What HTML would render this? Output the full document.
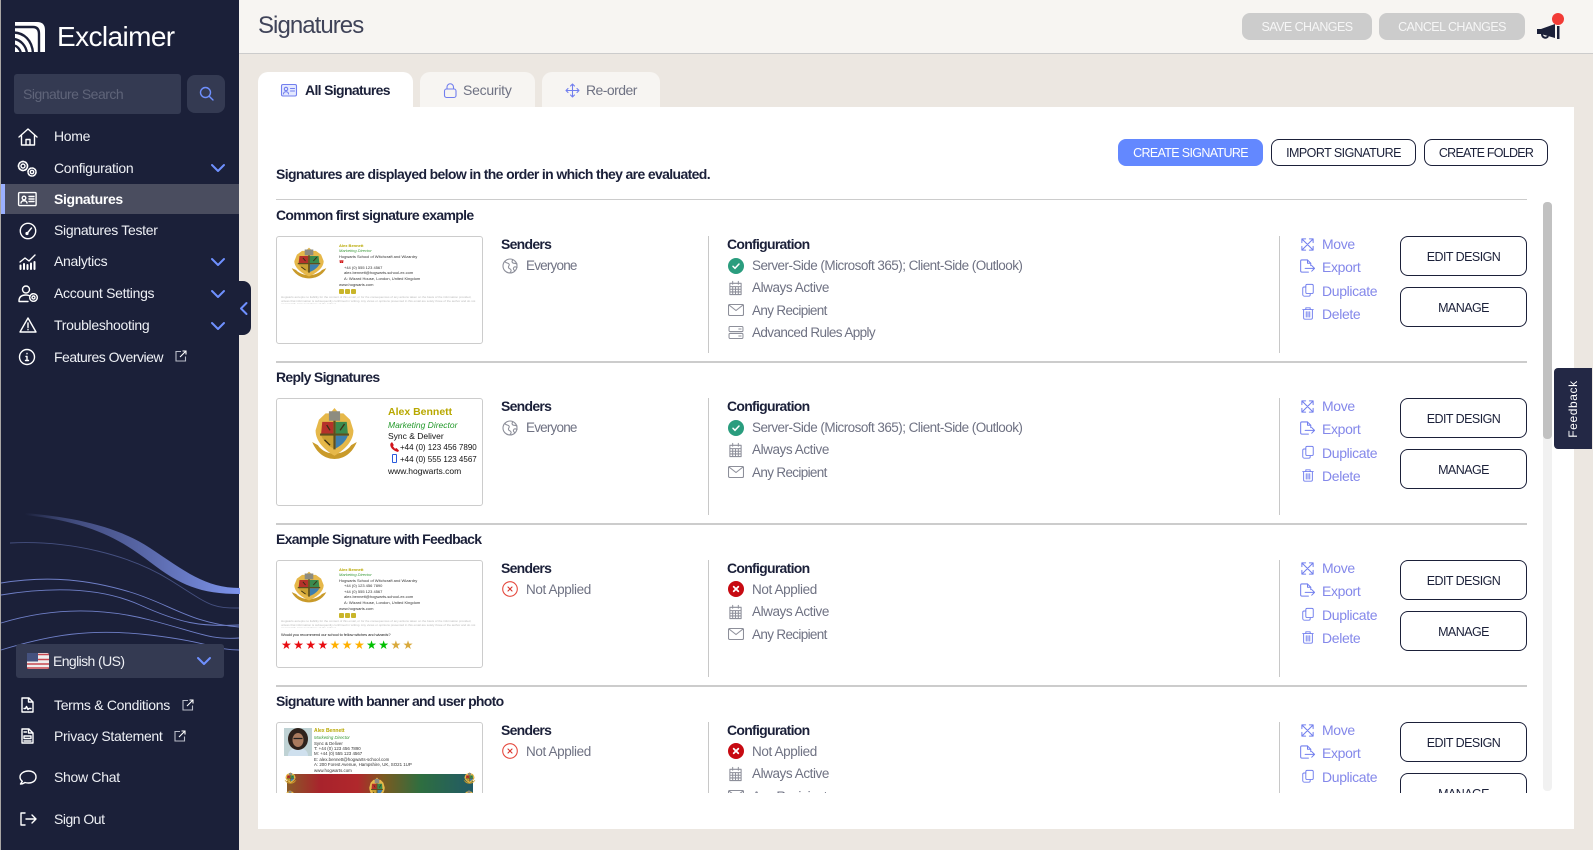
<!DOCTYPE html>
<html><head><meta charset="utf-8"><title>Signatures</title>
<style>
*{box-sizing:border-box;margin:0;padding:0}
html,body{width:1593px;height:850px;overflow:hidden;background:#ece7e1;font-family:"Liberation Sans",sans-serif;color:#1b2039}
.a{position:absolute}
.t{position:absolute;white-space:nowrap;height:20px;line-height:20px}
svg{position:absolute;overflow:visible;fill:none}
#side{left:1px;top:0;width:238px;height:850px;background:#1b2039}
#side .n{left:53px;font-size:14px;color:#eef0f5;letter-spacing:-.3px}
.ic{stroke:#fff;stroke-width:1.4;stroke-linecap:round;stroke-linejoin:round}
.chev{stroke:#6f90ff;stroke-width:2;stroke-linecap:round;stroke-linejoin:round}
.btn{position:absolute;border-radius:8px;text-align:center;font-size:12.5px;white-space:nowrap;letter-spacing:-.55px}
.out{border:1px solid #1b2039;background:#fff;color:#1b2039}
.row{position:absolute;left:0;width:1593px;height:100px}
.ti{left:276px;font-size:14px;font-weight:bold;letter-spacing:-.68px}
.thumb{position:absolute;left:276px;top:0;width:207px;height:108px;border:1px solid #ccc;border-radius:3px;background:#fff;overflow:hidden}
.h{font-size:14px;font-weight:bold;letter-spacing:-.72px}
.m{font-size:13.5px;color:#6f7283}
.ev{letter-spacing:-.8px}.sv{letter-spacing:-.55px}.aa{letter-spacing:-.43px}.ar{letter-spacing:-.66px}.adv{letter-spacing:-.6px}.na{letter-spacing:-.38px}
.act{font-size:14px;color:#8488ea;left:1322px;letter-spacing:-.35px}
.vl{position:absolute;top:0;width:1px;height:117px;background:#c8c8c8}
.s{stroke:#8d8f9a;stroke-width:1.1;stroke-linecap:round;stroke-linejoin:round}
.p{stroke:#727fee;stroke-width:1.1;stroke-linecap:round;stroke-linejoin:round}
.tt{position:absolute;white-space:nowrap;font-size:4px;line-height:5px;color:#333}
.sc{position:absolute;top:52px;width:5px;height:5px;background:#c9b52a;border-radius:1px}
</style></head><body>
<svg width="0" height="0" style="position:absolute"><defs>
<symbol id="crest" viewBox="0 0 44 50" preserveAspectRatio="none"><path d="M2 33C7 46 16 49 22 49S37 46 42 33L37 36C33 42 27 44 22 44S11 42 7 36Z" fill="#c99a2a"/><path d="M22 1L26 6H30L36 12L39 22C39 33 30 41 22 46C14 41 5 33 5 22L8 12L14 6H18Z" fill="#e6b84a"/><path d="M17 4h10v9H17z" fill="#8d8c80"/><path d="M11 14H21V25H10Z" fill="#b5312a"/><path d="M23 14H33L34 25H23Z" fill="#3a8a4e"/><path d="M10 27H21V39C16 37 12 32 10 27Z" fill="#c9a032"/><path d="M23 27H34C32 33 27 37 23 39Z" fill="#3e7fae"/><path d="M21 13h2v27h-2zM9 25h26v2H9z" fill="#5d4f1e"/><path d="M13 31l5 5M31 16l-4 6M15 17l3 5" stroke="#3a2f14" stroke-width="1.200"/></symbol>
<symbol id="expand" viewBox="0 0 16 16"><path d="M2 6V2h4M10 2h4v4M14 10v4h-4M6 14H2v-4M2 2l12 12M14 2L2 14"/></symbol>
<symbol id="export" viewBox="0 0 17 16"><path d="M9.500 14H2.500a1.300 1.300 0 0 1-1.300-1.300V2.300A1.300 1.300 0 0 1 2.500 1h6l3.500 3.500V7M8.500 1v3.500H12M6 10h10M13 7l3 3-3 3"/></symbol>
<symbol id="dup" viewBox="0 0 16 16"><rect x="5.500" y="1" width="8.500" height="10.500" rx="1.500"/><path d="M5.500 4H3.500A1.500 1.500 0 0 0 2 5.500v7A2 2 0 0 0 4 14.500h5a1.500 1.500 0 0 0 1.500-1.500v-1.500"/></symbol>
<symbol id="trash" viewBox="0 0 16 16"><path d="M2 3.500h12M5.500 3.500V1.500h5v2M3 3.500V13a1.500 1.500 0 0 0 1.500 1.500h7A1.500 1.500 0 0 0 13 13V3.500M6 6v6M8 6v6M10 6v6"/></symbol>
<symbol id="globe" viewBox="0 0 16 16"><circle cx="8" cy="8" r="7"/><path d="M3 3.500c1 2 3 1 4 2.500s-1 2-.5 3.500 2 1 2.500 2.500-.5 2-1 2.500M11 1.800C9.500 3 10 4.500 11 5s2.500 0 4 1M15 9.500c-1.500-1-3-1-3.500.5s.5 2 1 2.500"/></symbol>
<symbol id="okc" viewBox="0 0 16 16"><circle cx="8" cy="8" r="8" fill="#2a9d7e"/><path d="M5 8.300l2 2 4-4.300" stroke="#fff" stroke-width="1.500" fill="none" stroke-linecap="round"/></symbol>
<symbol id="noc" viewBox="0 0 16 16"><circle cx="8" cy="8" r="8" fill="#c70a12"/><path d="M5.700 5.700l4.600 4.600M10.300 5.700l-4.600 4.600" stroke="#fff" stroke-width="1.800" fill="none" stroke-linecap="round"/></symbol>
<symbol id="xo" viewBox="0 0 16 16"><circle cx="8" cy="8" r="7.300" stroke="#e5493e" stroke-width="1.100" fill="none"/><path d="M6 6l4 4M10 6l-4 4" stroke="#d8332a" stroke-width="1.100" fill="none" stroke-linecap="round"/></symbol>
<symbol id="cal" viewBox="0 0 16 16"><path d="M2 3h12v12H2zM2 6.500h12M2 9.300h12M2 12.200h12M5 6.500V15M8 6.500V15M11 6.500V15M5 1v3M11 1v3"/></symbol>
<symbol id="env" viewBox="0 0 16 12"><rect x=".5" y=".5" width="15" height="11" rx="1.200"/><path d="M1 1l7 5.500L15 1"/></symbol>
<symbol id="srv" viewBox="0 0 16 14"><rect x=".5" y=".5" width="15" height="5.500" rx="1.200"/><rect x=".5" y="8" width="15" height="5.500" rx="1.200"/><path d="M11 3.200h2.500M11 10.800h2.500"/></symbol>
<symbol id="ext" viewBox="0 0 12 12"><path d="M6 1.500H1v9.500h9.500V6.500" stroke="#b9bcc8"/><path d="M5 7l6-6M7.500 1H11v3.500" stroke="#fff"/></symbol>
</defs></svg>

<div class="a" style="left:0;top:0;width:1593px;height:54px;background:#f7f5f2;border-bottom:1px solid #ccc"></div>
<div class="t" style="left:258px;top:15px;font-size:24px;color:#3f4358;height:22px;line-height:22px;letter-spacing:-.95px">Signatures</div>
<div class="btn" style="left:1242px;top:13px;width:130px;height:27px;line-height:28px;background:#ccc;color:#f6f6f6">SAVE CHANGES</div>
<div class="btn" style="left:1379px;top:13px;width:146px;height:27px;line-height:28px;background:#ccc;color:#f6f6f6">CANCEL CHANGES</div>
<svg style="left:1537px;top:22px" width="24" height="18"><path d="M0 7h4L18 2v14L4 12H0z" fill="#1b2039"/><path d="M5 12c0 4 5 5 6 2" stroke="#1b2039" stroke-width="2"/><rect x="20" y="4" width="2.500" height="13" fill="#1b2039"/></svg>
<div class="a" style="left:1552px;top:13px;width:12px;height:12px;border-radius:50%;background:#f23b36"></div>

<!-- tabs -->
<div class="a" style="left:258px;top:72px;width:155px;height:36px;background:#fff;border-radius:10px 10px 0 0"></div>
<div class="a" style="left:420px;top:72px;width:115px;height:36px;background:#f7f5f2;border-radius:10px 10px 0 0"></div>
<div class="a" style="left:542px;top:72px;width:118px;height:36px;background:#f7f5f2;border-radius:10px 10px 0 0"></div>
<svg style="left:281px;top:84px" width="16" height="13" class="p"><rect x=".5" y=".5" width="15" height="11.500" rx="1.500" fill="#e4e9ff"/><circle cx="5" cy="5" r="1.700"/><path d="M2.500 10c0-3 5-3 5 0M9.500 4.500h4M9.500 7h4"/></svg>
<div class="t" style="left:305px;top:80px;font-size:14px;font-weight:bold;letter-spacing:-.66px">All Signatures</div>
<svg style="left:444px;top:83px" width="13" height="15" class="p"><rect x=".5" y="6" width="11.500" height="8.500" rx="2"/><path d="M3 6V4a3.200 3.200 0 0 1 6.500 0v2"/></svg>
<div class="t" style="left:463px;top:80px;font-size:14px;color:#6f7283;letter-spacing:-.25px">Security</div>
<svg style="left:565px;top:83px" width="15" height="15" class="p"><path d="M7.500 1v13M1 7.500h13M5.500 3l2-2 2 2M5.500 12l2 2 2-2M3 5.500l-2 2 2 2M12 5.500l2 2-2 2"/></svg>
<div class="t" style="left:586px;top:80px;font-size:14px;color:#6f7283;letter-spacing:-.55px">Re-order</div>

<div class="a" style="left:258px;top:107px;width:1316px;height:722px;background:#fff"></div>
<div class="btn" style="left:1118px;top:139px;width:145px;height:27px;line-height:28px;background:#6388ff;color:#fff;letter-spacing:-.65px">CREATE SIGNATURE</div>
<div class="btn out" style="left:1271px;top:139px;width:145px;height:27px;line-height:26px;letter-spacing:-.55px">IMPORT SIGNATURE</div>
<div class="btn out" style="left:1424px;top:139px;width:124px;height:27px;line-height:26px;letter-spacing:-.75px">CREATE FOLDER</div>
<div class="t" style="left:276px;top:164px;font-size:14px;font-weight:bold;letter-spacing:-.64px">Signatures are displayed below in the order in which they are evaluated.</div>
<div class="a" style="left:276px;top:199px;width:1251px;height:1px;background:#ccc"></div>
<div class="a" style="left:1543px;top:202px;width:9px;height:589px;background:#f1f1f1;border-radius:4px"></div>
<div class="a" style="left:1543px;top:202px;width:9px;height:237px;background:#c1c1c1;border-radius:4px"></div>

<div class="a" id="list" style="left:0;top:0;width:1593px;height:793px;overflow:hidden">

<!-- ROW 1 -->
<div class="row" style="top:236px">
<div class="t ti" style="top:-31px">Common first signature example</div>
<div class="thumb">
<svg style="left:13px;top:10px" width="38" height="32"><use href="#crest" width="38" height="32"/></svg>
<div class="tt" style="left:62px;top:6px;color:#b8a800;font-weight:bold">Alex Bennett</div>
<div class="tt" style="left:62px;top:11px;color:#3a9a3a;font-style:italic">Marketing Director</div>
<div class="tt" style="left:62px;top:17px">Hogwarts School of Witchcraft and Wizardry</div>
<div class="tt" style="left:62px;top:22px;color:#c00">&#9742;</div>
<div class="tt" style="left:67px;top:28px">+44 (0) 555 123 4567</div>
<div class="tt" style="left:67px;top:33px">alex.bennett@hogwarts-school-ex.com</div>
<div class="tt" style="left:67px;top:39px">A: Wizard House, London, United Kingdom</div>
<div class="tt" style="left:62px;top:45px">www.hogwarts.com</div>
<div class="sc" style="left:62px"></div><div class="sc" style="left:68px"></div><div class="sc" style="left:74px"></div>
<div class="tt" style="left:4px;top:59px;width:198px;white-space:normal;font-size:3px;line-height:3.500px;color:#bbb;height:8px;overflow:hidden">Hogwarts accepts no liability for the content of this email, or for the consequences of any actions taken on the basis of the information provided, unless that information is subsequently confirmed in writing. Any views or opinions presented in this email are solely those of the author and do not necessarily represent those of the school.</div>
</div>
<div class="t h" style="left:501px;top:-2px">Senders</div>
<svg class="s" style="left:502px;top:22px" width="16" height="16"><use href="#globe" width="16" height="16"/></svg>
<div class="t m ev" style="left:526px;top:20px">Everyone</div>
<div class="vl" style="left:708px"></div>
<div class="t h" style="left:727px;top:-2px">Configuration</div>
<svg style="left:728px;top:22px" width="16" height="16"><use href="#okc" width="16" height="16"/></svg>
<div class="t m sv" style="left:752px;top:20px">Server-Side (Microsoft 365); Client-Side (Outlook)</div>
<svg class="s" style="left:728px;top:44px" width="15" height="16"><use href="#cal" width="15" height="16"/></svg>
<div class="t m aa" style="left:752px;top:42px">Always Active</div>
<svg class="s" style="left:728px;top:68px" width="16" height="12"><use href="#env" width="16" height="12"/></svg>
<div class="t m ar" style="left:752px;top:65px">Any Recipient</div>
<svg class="s" style="left:728px;top:90px" width="16" height="13"><use href="#srv" width="16" height="13"/></svg>
<div class="t m adv" style="left:752px;top:87px">Advanced Rules Apply</div>
<div class="vl" style="left:1279px"></div>
<svg class="p" style="left:1300px;top:1px" width="15" height="15"><use href="#expand" width="15" height="15"/></svg><div class="t act" style="top:-2px">Move</div>
<svg class="p" style="left:1299px;top:23px" width="17" height="15"><use href="#export" width="17" height="15"/></svg><div class="t act" style="top:21px">Export</div>
<svg class="p" style="left:1301px;top:47px" width="14" height="15"><use href="#dup" width="14" height="15"/></svg><div class="t act" style="top:45px">Duplicate</div>
<svg class="p" style="left:1301px;top:70px" width="14" height="15"><use href="#trash" width="14" height="15"/></svg><div class="t act" style="top:68px">Delete</div>
<div class="btn out" style="left:1400px;top:0;width:127px;height:40px;line-height:40px">EDIT DESIGN</div>
<div class="btn out" style="left:1400px;top:51px;width:127px;height:40px;line-height:40px">MANAGE</div>
</div>

<!-- ROW 2 -->
<div class="row" style="top:398px">
<div class="a" style="left:276px;top:-37px;width:1251px;height:2px;background:#ccc"></div>
<div class="t ti" style="top:-31px">Reply Signatures</div>
<div class="thumb">
<svg style="left:33px;top:8px" width="49" height="53"><use href="#crest" width="49" height="53"/></svg>
<div class="tt" style="left:111px;top:7px;font-size:10.500px;line-height:13px;font-weight:bold;color:#b8a800">Alex Bennett</div>
<div class="tt" style="left:111px;top:21px;font-size:8.500px;line-height:11px;font-style:italic;color:#22992a">Marketing Director</div>
<div class="tt" style="left:111px;top:32px;font-size:8.500px;line-height:11px;color:#111">Sync &amp; Deliver</div>
<svg style="left:112px;top:43px" width="11" height="11"><path d="M1.500 1.500c-1.200 3 2 7 7.500 8.500l1-1.500-2.500-2.500-1.500.8-2-2.500.8-1.300L3 0z" fill="#d0141c"/></svg>
<div class="tt" style="left:123px;top:43px;font-size:8px;line-height:11px;color:#111;letter-spacing:0">+44 (0) 123 456 7890</div>
<div class="a" style="left:115px;top:55px;width:5px;height:9px;border:1.500px solid #2a5bdc;border-radius:1px"></div>
<div class="tt" style="left:123px;top:55px;font-size:8px;line-height:11px;color:#111;letter-spacing:0">+44 (0) 555 123 4567</div>
<div class="tt" style="left:111px;top:67px;font-size:8.500px;line-height:11px;color:#111">www.hogwarts.com</div>
</div>
<div class="t h" style="left:501px;top:-2px">Senders</div>
<svg class="s" style="left:502px;top:22px" width="16" height="16"><use href="#globe" width="16" height="16"/></svg>
<div class="t m ev" style="left:526px;top:20px">Everyone</div>
<div class="vl" style="left:708px"></div>
<div class="t h" style="left:727px;top:-2px">Configuration</div>
<svg style="left:728px;top:22px" width="16" height="16"><use href="#okc" width="16" height="16"/></svg>
<div class="t m sv" style="left:752px;top:20px">Server-Side (Microsoft 365); Client-Side (Outlook)</div>
<svg class="s" style="left:728px;top:44px" width="15" height="16"><use href="#cal" width="15" height="16"/></svg>
<div class="t m aa" style="left:752px;top:42px">Always Active</div>
<svg class="s" style="left:728px;top:68px" width="16" height="12"><use href="#env" width="16" height="12"/></svg>
<div class="t m ar" style="left:752px;top:65px">Any Recipient</div>
<div class="vl" style="left:1279px"></div>
<svg class="p" style="left:1300px;top:1px" width="15" height="15"><use href="#expand" width="15" height="15"/></svg><div class="t act" style="top:-2px">Move</div>
<svg class="p" style="left:1299px;top:23px" width="17" height="15"><use href="#export" width="17" height="15"/></svg><div class="t act" style="top:21px">Export</div>
<svg class="p" style="left:1301px;top:47px" width="14" height="15"><use href="#dup" width="14" height="15"/></svg><div class="t act" style="top:45px">Duplicate</div>
<svg class="p" style="left:1301px;top:70px" width="14" height="15"><use href="#trash" width="14" height="15"/></svg><div class="t act" style="top:68px">Delete</div>
<div class="btn out" style="left:1400px;top:0;width:127px;height:40px;line-height:40px">EDIT DESIGN</div>
<div class="btn out" style="left:1400px;top:51px;width:127px;height:40px;line-height:40px">MANAGE</div>
</div>

<!-- ROW 3 -->
<div class="row" style="top:560px">
<div class="a" style="left:276px;top:-37px;width:1251px;height:2px;background:#ccc"></div>
<div class="t ti" style="top:-31px">Example Signature with Feedback</div>
<div class="thumb">
<svg style="left:13px;top:10px" width="38" height="32"><use href="#crest" width="38" height="32"/></svg>
<div class="tt" style="left:62px;top:6px;color:#b8a800;font-weight:bold">Alex Bennett</div>
<div class="tt" style="left:62px;top:11px;color:#3a9a3a;font-style:italic">Marketing Director</div>
<div class="tt" style="left:62px;top:17px">Hogwarts School of Witchcraft and Wizardry</div>
<div class="tt" style="left:67px;top:22px">+44 (0) 123 456 7890</div>
<div class="tt" style="left:67px;top:28px">+44 (0) 555 123 4567</div>
<div class="tt" style="left:67px;top:33px">alex.bennett@hogwarts-school-ex.com</div>
<div class="tt" style="left:67px;top:39px">A: Wizard House, London, United Kingdom</div>
<div class="tt" style="left:62px;top:45px">www.hogwarts.com</div>
<div class="sc" style="left:62px"></div><div class="sc" style="left:68px"></div><div class="sc" style="left:74px"></div>
<div class="tt" style="left:4px;top:59px;width:198px;white-space:normal;font-size:3px;line-height:3.500px;color:#bbb;height:8px;overflow:hidden">Hogwarts accepts no liability for the content of this email, or for the consequences of any actions taken on the basis of the information provided, unless that information is subsequently confirmed in writing. Any views or opinions presented in this email are solely those of the author and do not necessarily represent those of the school.</div>
<div class="tt" style="left:4px;top:71px;color:#222;letter-spacing:-.1px">Would you recommend our school to fellow witches and wizards?</div>
<div class="tt" style="left:4px;top:78px;font-size:12px;line-height:13px;letter-spacing:1.400px;color:#e80b10">&#9733;&#9733;&#9733;&#9733;<span style="color:#ffb000">&#9733;&#9733;&#9733;</span><span style="color:#00c000">&#9733;&#9733;</span><span style="color:#d9a93c">&#9733;&#9733;</span></div>
</div>
<div class="t h" style="left:501px;top:-2px">Senders</div>
<svg style="left:502px;top:21px" width="16" height="16"><use href="#xo" width="16" height="16"/></svg>
<div class="t m na" style="left:526px;top:20px">Not Applied</div>
<div class="vl" style="left:708px"></div>
<div class="t h" style="left:727px;top:-2px">Configuration</div>
<svg style="left:728px;top:21px" width="16" height="16"><use href="#noc" width="16" height="16"/></svg>
<div class="t m na" style="left:752px;top:20px">Not Applied</div>
<svg class="s" style="left:728px;top:44px" width="15" height="16"><use href="#cal" width="15" height="16"/></svg>
<div class="t m aa" style="left:752px;top:42px">Always Active</div>
<svg class="s" style="left:728px;top:68px" width="16" height="12"><use href="#env" width="16" height="12"/></svg>
<div class="t m ar" style="left:752px;top:65px">Any Recipient</div>
<div class="vl" style="left:1279px"></div>
<svg class="p" style="left:1300px;top:1px" width="15" height="15"><use href="#expand" width="15" height="15"/></svg><div class="t act" style="top:-2px">Move</div>
<svg class="p" style="left:1299px;top:23px" width="17" height="15"><use href="#export" width="17" height="15"/></svg><div class="t act" style="top:21px">Export</div>
<svg class="p" style="left:1301px;top:47px" width="14" height="15"><use href="#dup" width="14" height="15"/></svg><div class="t act" style="top:45px">Duplicate</div>
<svg class="p" style="left:1301px;top:70px" width="14" height="15"><use href="#trash" width="14" height="15"/></svg><div class="t act" style="top:68px">Delete</div>
<div class="btn out" style="left:1400px;top:0;width:127px;height:40px;line-height:40px">EDIT DESIGN</div>
<div class="btn out" style="left:1400px;top:51px;width:127px;height:40px;line-height:40px">MANAGE</div>
</div>

<!-- ROW 4 -->
<div class="row" style="top:722px">
<div class="a" style="left:276px;top:-37px;width:1251px;height:2px;background:#ccc"></div>
<div class="t ti" style="top:-31px">Signature with banner and user photo</div>
<div class="thumb">
<svg style="left:7px;top:5px" width="28" height="28"><rect width="28" height="28" fill="#bfd2d4"/><path d="M4 28c0-6 5-8 10-8s10 2 10 8z" fill="#cfe0ee"/><ellipse cx="14" cy="11" rx="10" ry="11" fill="#2e221c"/><ellipse cx="14" cy="12" rx="5.500" ry="7" fill="#a97a5e"/><path d="M9.500 10.500h9" stroke="#222" stroke-width="1.300"/></svg>
<div class="tt" style="left:37px;top:6px;color:#b8a800;font-weight:bold;font-size:5px">Alex Bennett</div>
<div class="tt" style="left:37px;top:12px;color:#3a9a3a;font-style:italic;font-size:4.400px">Marketing Director</div>
<div class="tt" style="left:37px;top:18px;font-size:4.400px">Sync &amp; Deliver</div>
<div class="tt" style="left:37px;top:23px;font-size:4.400px">T: +44 (0) 123 456 7890</div>
<div class="tt" style="left:37px;top:28px;font-size:4.400px">M: +44 (0) 555 123 4567</div>
<div class="tt" style="left:37px;top:34px;font-size:4.400px">E: alex.bennett@hogwarts-school.com</div>
<div class="tt" style="left:37px;top:39px;font-size:4.400px">A: 200 Forest Avenue, Hampshire, UK, SO21 1UP</div>
<div class="tt" style="left:37px;top:45px;font-size:4.400px">www.hogwarts.com</div>
<div class="a" style="left:10px;top:51px;width:186px;height:30px;background:linear-gradient(90deg,#8a5a28,#a8232c 18%,#b0282c 38%,#7a5a20 52%,#2e6e40 72%,#225a66 100%)"></div>
<svg style="left:90px;top:54px" width="20" height="24"><use href="#crest" width="20" height="24"/></svg>
<svg style="left:7px;top:49px" width="13" height="12"><use href="#crest" width="13" height="12"/></svg>
<svg style="left:186px;top:49px" width="13" height="12"><use href="#crest" width="13" height="12"/></svg>
<svg style="left:7px;top:67px" width="12" height="12"><use href="#crest" width="12" height="12"/></svg>
<svg style="left:186px;top:67px" width="12" height="12"><use href="#crest" width="12" height="12"/></svg>
</div>
<div class="t h" style="left:501px;top:-2px">Senders</div>
<svg style="left:502px;top:21px" width="16" height="16"><use href="#xo" width="16" height="16"/></svg>
<div class="t m na" style="left:526px;top:20px">Not Applied</div>
<div class="vl" style="left:708px"></div>
<div class="t h" style="left:727px;top:-2px">Configuration</div>
<svg style="left:728px;top:21px" width="16" height="16"><use href="#noc" width="16" height="16"/></svg>
<div class="t m na" style="left:752px;top:20px">Not Applied</div>
<svg class="s" style="left:728px;top:44px" width="15" height="16"><use href="#cal" width="15" height="16"/></svg>
<div class="t m aa" style="left:752px;top:42px">Always Active</div>
<svg class="s" style="left:728px;top:68px" width="16" height="12"><use href="#env" width="16" height="12"/></svg>
<div class="t m ar" style="left:752px;top:65px">Any Recipient</div>
<div class="vl" style="left:1279px"></div>
<svg class="p" style="left:1300px;top:1px" width="15" height="15"><use href="#expand" width="15" height="15"/></svg><div class="t act" style="top:-2px">Move</div>
<svg class="p" style="left:1299px;top:23px" width="17" height="15"><use href="#export" width="17" height="15"/></svg><div class="t act" style="top:21px">Export</div>
<svg class="p" style="left:1301px;top:47px" width="14" height="15"><use href="#dup" width="14" height="15"/></svg><div class="t act" style="top:45px">Duplicate</div>
<div class="btn out" style="left:1400px;top:0;width:127px;height:40px;line-height:40px">EDIT DESIGN</div>
<div class="btn out" style="left:1400px;top:51px;width:127px;height:40px;line-height:40px">MANAGE</div>
</div>
</div>

<!-- feedback -->
<div class="a" style="left:1554px;top:368px;width:38px;height:81px;background:#232845;border-radius:4px 0 0 4px"></div>
<div class="t" style="left:1533px;top:399px;width:80px;text-align:center;color:#fff;font-size:12px;letter-spacing:.6px;transform:rotate(-90deg)">Feedback</div>

<!-- sidebar -->
<div class="a" style="left:0;top:0;width:1px;height:850px;background:#a9a6a4"></div>
<div class="a" id="side">
<svg style="left:-1px;top:480px" width="239" height="164">
<defs><linearGradient id="g" x1="0" x2="1"><stop offset="0" stop-color="#7e92e8" stop-opacity="0"/><stop offset=".3" stop-color="#5a67a8" stop-opacity=".7"/><stop offset="1" stop-color="#7e95ee"/></linearGradient></defs>
<path d="M25 33C70 37 115 45 150 68S205 108 240 108V114C200 114 180 105 150 82S90 42 25 35Z" fill="url(#g)"/>
<g stroke="#6f7fc7" stroke-width=".9" fill="none">
<path d="M1 103C50 95 90 100 130 112S190 143 239 147"/>
<path d="M1 115C50 107 100 107 140 125S200 147 239 145"/>
<path d="M1 143C50 128 100 127 150 140S210 160 239 158"/>
<path d="M1 170C50 155 90 148 150 155S215 170 239 170"/>
<path d="M10 63C70 60 130 75 170 100S210 128 239 128" stroke-opacity=".5"/>
</g></svg>

<!-- logo -->
<svg style="left:14px;top:22px" width="31" height="30"><path d="M0 0H22Q30 0 30 8V30H0Z" fill="#fff"/><g stroke="#1b2039" fill="none" stroke-width="2.400"><path d="M-1 5H18Q24 5 24 12V31"/><path d="M-1 10.500C9 11 17 18 18 31"/><path d="M-1 17C6 18 11 24 12 31"/><path d="M-1 23.500C2 24 5 27 6 31"/></g></svg>
<div class="t" style="left:56px;top:22px;height:30px;line-height:30px;font-size:28px;color:#fff;letter-spacing:-.6px">Exclaimer</div>

<div class="a" style="left:13px;top:74px;width:167px;height:40px;background:#343a52;border-radius:3px"></div>
<div class="t" style="left:22px;top:84px;font-size:14px;color:#5f6479;letter-spacing:-.5px">Signature Search</div>
<div class="a" style="left:186px;top:75px;width:38px;height:38px;background:#343a52;border-radius:8px"></div>
<svg style="left:198px;top:86px" width="16" height="16" stroke="#6f90ff" stroke-width="1.400"><circle cx="6.500" cy="6.500" r="5"/><path d="M10.200 10.200L14 14" stroke-linecap="round"/></svg>

<div class="a" style="left:0;top:184px;width:238px;height:30px;background:#4a4d5f"></div>
<div class="a" style="left:0;top:184px;width:4px;height:30px;background:#9bb0ff"></div>

<svg class="ic" style="left:17px;top:128px" width="20" height="18"><path d="M1 9L10 1l9 8M3.500 7.500V17h13V7.500M8 17v-5.500h4V17"/></svg>
<div class="t n" style="top:126px">Home</div>
<svg class="ic" style="left:16px;top:160px" width="22" height="18" stroke-width="1.200"><circle cx="6" cy="6" r="2"/><circle cx="6" cy="6" r="4.500" stroke-dasharray="2 1.300" stroke-width="1.700"/><circle cx="15" cy="12" r="1.700"/><circle cx="15" cy="12" r="4" stroke-dasharray="2 1.100" stroke-width="1.600"/></svg>
<div class="t n" style="top:158px">Configuration</div>
<svg class="chev" style="left:210px;top:164px" width="14" height="9"><path d="M1 1l6 6 6-6"/></svg>
<svg class="ic" style="left:17px;top:192px" width="19" height="15" stroke-width="1.200"><rect x=".6" y=".6" width="17.500" height="13" rx="1"/><circle cx="6" cy="6" r="1.800"/><path d="M3 11c0-3 6-3 6 0M11 4.500h5M11 7h5M11 9.500h5"/></svg>
<div class="t n" style="top:189px;font-weight:bold;color:#fff;letter-spacing:-.35px">Signatures</div>
<svg class="ic" style="left:18px;top:222px" width="18" height="18"><circle cx="9" cy="9" r="7.700"/><path d="M8 11.500L12.500 6"/><circle cx="8" cy="11.500" r=".9"/></svg>
<div class="t n" style="top:220px">Signatures Tester</div>
<svg class="ic" style="left:18px;top:253px" width="18" height="17" stroke-width="1.200"><path d="M1 9l5-4 4 3 6-6"/><path d="M1.500 12.500v3.500M5 11v5M8.500 12v4M12 10.500v5.500M15.500 9v7" stroke-width="2"/></svg>
<div class="t n" style="top:251px">Analytics</div>
<svg class="chev" style="left:210px;top:258px" width="14" height="9"><path d="M1 1l6 6 6-6"/></svg>
<svg class="ic" style="left:17px;top:285px" width="22" height="18" stroke-width="1.200"><circle cx="8" cy="4.500" r="3.500"/><path d="M1 16c0-4.500 3-6 7-6 1.500 0 2.500.3 3.500.8M1 16.500h9"/><circle cx="15.500" cy="12.500" r="1.500"/><circle cx="15.500" cy="12.500" r="3.800" stroke-dasharray="2 1" stroke-width="1.500"/></svg>
<div class="t n" style="top:283px">Account Settings</div>
<svg class="chev" style="left:210px;top:290px" width="14" height="9"><path d="M1 1l6 6 6-6"/></svg>
<svg class="ic" style="left:18px;top:317px" width="18" height="16"><path d="M9 1L17 15H1Z"/><path d="M9 6v4.500M9 12.500v.3"/></svg>
<div class="t n" style="top:315px">Troubleshooting</div>
<svg class="chev" style="left:210px;top:322px" width="14" height="9"><path d="M1 1l6 6 6-6"/></svg>
<svg class="ic" style="left:18px;top:349px" width="18" height="16"><circle cx="8" cy="8" r="7.500"/><path d="M8 4.500v.3M7 7.500h1v4M6.500 11.500h3"/></svg>
<div class="t n" style="top:347px;letter-spacing:-.5px">Features Overview</div>
<svg style="left:174px;top:350px" width="12" height="12" stroke-width="1.100"><use href="#ext" width="12" height="12"/></svg>

<div class="a" style="left:15px;top:644px;width:208px;height:34px;background:#343a52;border-radius:3px"></div>
<svg style="left:26px;top:653px" width="22" height="16"><rect width="22" height="16" rx="2" fill="#eee"/><path d="M0 1.500h22M0 6.500h22M0 11h22M0 15h22" stroke="#c6464f" stroke-width="1.600"/><rect width="11" height="8.500" fill="#45527f"/></svg>
<div class="t n" style="left:52px;top:651px;letter-spacing:-.6px">English (US)</div>
<svg class="chev" style="left:196px;top:657px" width="14" height="9"><path d="M1 1l6 6 6-6"/></svg>

<svg class="ic" style="left:20px;top:697px" width="13" height="16" stroke-width="1.200"><path d="M1 1h7l4 4v10H1zM7.500 1v4H12M3 11.500h1.500l1-2 1.500 3 1-1h2"/></svg>
<div class="t n" style="top:695px">Terms &amp; Conditions</div>
<svg style="left:181px;top:699px" width="12" height="12" stroke-width="1.100"><use href="#ext" width="12" height="12"/></svg>
<svg class="ic" style="left:20px;top:728px" width="13" height="16" stroke-width="1.200"><path d="M1 1h7l4 4v10H1zM7.500 1v4H12M3 8h7v2.500H3zM3 13h7M3 4h2.500"/></svg>
<div class="t n" style="top:726px">Privacy Statement</div>
<svg style="left:173px;top:730px" width="12" height="12" stroke-width="1.100"><use href="#ext" width="12" height="12"/></svg>
<svg class="ic" style="left:18px;top:770px" width="18" height="15"><path d="M9.500 1C5 1 1 3.500 1 7c0 1.800 1 3.300 2.300 4.300L1.500 14c2 0 3.500-.8 4.500-1.500 1 .3 2.300.5 3.500.5 4.500 0 7.500-2.500 7.500-6S14 1 9.500 1Z"/></svg>
<div class="t n" style="top:767px">Show Chat</div>
<svg class="ic" style="left:18px;top:812px" width="18" height="14"><path d="M6 1H2v12h4M7 7h10M13 3l4 4-4 4"/></svg>
<div class="t n" style="top:809px;letter-spacing:-.5px">Sign Out</div>
</div>
<div class="a" style="left:239px;top:281px;width:12px;height:54px;background:#1b2039;border-radius:0 8px 8px 0"></div>
<svg class="chev" style="left:240px;top:302px" width="8" height="13"><path d="M6.500 1L1 6.500 6.500 12"/></svg>
</body></html>
